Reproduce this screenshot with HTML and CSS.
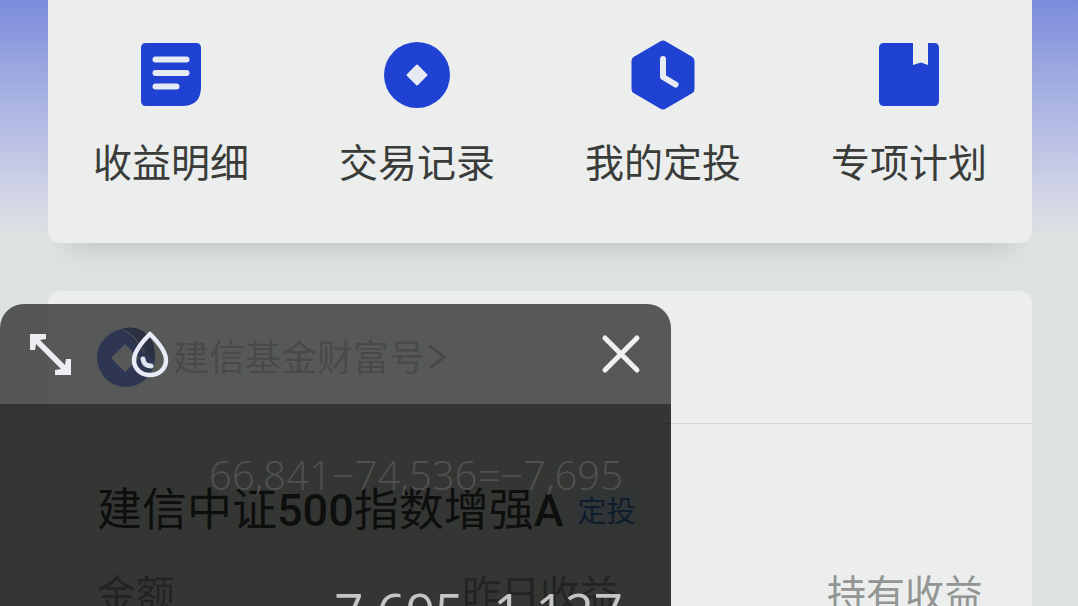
FILE: index.html
```html
<!DOCTYPE html>
<html lang="zh-CN">
<head>
<meta charset="utf-8">
<meta name="viewport" content="width=device-width, initial-scale=1">
<title>基金</title>
<link rel="stylesheet" href="styles.css">
</head>
<body>
<main class="page">
  <nav class="card shortcuts">
    <a class="shortcut" href="#">
      <svg class="shortcut-icon" viewBox="0 0 72 72" aria-hidden="true"><path fill="#1f42d3" d="M11 4H61Q66 4 66 9V48Q66 67 47 67H11Q6 67 6 62V9Q6 4 11 4Z"/><path d="M20.500 20.500H51.500M20.500 34H51.500M20.500 47.500H41.500" stroke="#e6eaf3" stroke-width="6" stroke-linecap="round"/></svg>
      <span>收益明细</span>
    </a>
    <a class="shortcut" href="#">
      <svg class="shortcut-icon" viewBox="0 0 72 72" aria-hidden="true"><circle cx="36" cy="36" r="33" fill="#1f42d3"/><path fill="#e6eaf3" stroke="#e6eaf3" stroke-width="2" stroke-linejoin="round" d="M36 26.500L45.500 36L36 45.500L26.500 36Z"/></svg>
      <span>交易记录</span>
    </a>
    <a class="shortcut" href="#">
      <svg class="shortcut-icon" viewBox="0 0 72 72" aria-hidden="true"><path fill="#1f42d3" stroke="#1f42d3" stroke-width="10" stroke-linejoin="round" d="M36 6.500L62.500 22V50L36 65.500L9.500 50V22Z"/><path d="M36 20V38L48.500 45.500" fill="none" stroke="#e6eaf3" stroke-width="6" stroke-linecap="round" stroke-linejoin="round"/></svg>
      <span>我的定投</span>
    </a>
    <a class="shortcut" href="#">
      <svg class="shortcut-icon" viewBox="0 0 72 72" aria-hidden="true"><path fill="#1f42d3" d="M11 4H40V26L48 23.500L55 26V4H61Q66 4 66 9V62Q66 67 61 67H11Q6 67 6 62V9Q6 4 11 4Z"/></svg>
      <span>专项计划</span>
    </a>
  </nav>

  <section class="card holding">
    <a class="holding-head" href="#">
      <svg class="brand" viewBox="0 0 60 60" aria-hidden="true"><circle cx="29" cy="31" r="29" fill="#1f42c8"/><path d="M24 2C44 -5 62 12 57 33L45 24Z" fill="#0f2470"/><path d="M26 3Q38 8 48 26" fill="none" stroke="#6f8de8" stroke-width="2"/><path d="M28 17L42 31L28 45L14 31Z" fill="#ebedec"/></svg>
      <span class="brand-name">建信基金财富号</span>
      <svg class="chevron" viewBox="0 0 20 30" aria-hidden="true"><path d="M3 4L17 15L3 26" fill="none" stroke="#999" stroke-width="3"/></svg>
    </a>
    <div class="holding-body">
      <div class="fund">
        <h2 class="fund-name">建信中证<b>500</b>指数增强<b>A</b></h2>
        <span class="tag">定投</span>
      </div>
      <div class="columns">
        <span>金额</span>
        <span>昨日收益</span>
        <span>持有收益</span>
      </div>
    </div>
  </section>
</main>

<aside class="calc" aria-label="计算器">
  <header class="calc-bar">
    <button class="tool" aria-label="缩放"><svg viewBox="0 0 48 48" aria-hidden="true"><path d="M8 8L41 41" stroke="#ededf2" stroke-width="5.500"/><path d="M4 20V4H20V9L14 10L10 14L9 20ZM45 29V45H29V40L35 39L39 35L40 29Z" fill="#ededf2"/></svg></button>
    <button class="tool" aria-label="透明度"><svg viewBox="0 0 48 48" aria-hidden="true"><path d="M24 4C19 9 8 20 8 30C8 39 15 45 24 45C33 45 40 39 40 30C40 20 29 9 24 4Z" fill="none" stroke="#e9ebf6" stroke-width="4.500" stroke-linejoin="round"/><path d="M17 29Q18 36 25 36" fill="none" stroke="#dfe2ef" stroke-width="5" stroke-linecap="round"/></svg></button>
    <button class="tool close" aria-label="关闭"><svg viewBox="0 0 48 48" aria-hidden="true"><path d="M8 8L40 40M40 8L8 40" stroke="#f0f0f3" stroke-width="5" stroke-linecap="round"/></svg></button>
  </header>
  <div class="calc-display">
    <div class="expression">66,841−74,536=−7,695</div>
    <div class="result">−7,695−1,127</div>
  </div>
</aside>
</body>
</html>
```
FILE: styles.css
```css
* { box-sizing: border-box; }

html { height: 100%; overflow: hidden; }

body {
  position: relative;
  min-height: 100%;
  margin: 0;
  overflow: hidden;
  background: linear-gradient(#7b8cdb 0, #a9b3e2 100px, #cfd2e6 190px, #dfe3e0 240px) #dfe3e0;
  font-family: "Noto Sans CJK SC", sans-serif;
  font-weight: 400;
  color: #3a3c3a;
}

a { color: inherit; text-decoration: none; }

.page {
  display: flex;
  flex-direction: column;
  gap: 48px;
  height: 100vh;
  padding: 0 46px 0 48px;
}

.card { background: #ebeeec; }

.shortcuts {
  display: grid;
  grid-template-columns: repeat(4, 1fr);
  padding: 39px 0 54px;
  border-radius: 0 0 12px 12px;
  box-shadow: 0 24px 24px -20px rgba(0, 0, 0, 0.14);
}

.shortcut {
  display: flex;
  flex-direction: column;
  align-items: center;
  gap: 21px;
  font-size: 39px;
  line-height: 57px;
}

.shortcut-icon { width: 72px; height: 72px; }

.holding {
  flex: none;
  border-radius: 12px 12px 0 0;
}

.holding-head {
  display: flex;
  align-items: center;
  gap: 16px;
  height: 133px;
  padding: 0 49px;
  border-bottom: 1px solid #d3d6d4;
  font-size: 36px;
  color: #a0a2a0;
}

.brand { width: 60px; height: 60px; }
.brand-name { padding-bottom: 4px; }
.chevron { width: 20px; height: 30px; margin-left: -14px; }

.holding-body { padding: 51px 49px 0; }

.fund { display: flex; align-items: center; gap: 12px; }

.fund-name {
  margin: 0;
  font-size: 45px;
  font-weight: 400;
  line-height: 64px;
  color: #2c2e2c;
}

.fund-name b { font-family: Roboto, sans-serif; font-weight: 500; }

.tag {
  padding: 0 2px;
  background: #e2e8f0;
  font-size: 29px;
  line-height: 40px;
  color: #2f72c4;
}

.columns {
  display: grid;
  grid-template-columns: 1fr 1fr 1fr;
  margin-top: 20px;
  font-size: 39px;
  line-height: 57px;
  color: #929592;
}

.columns span:nth-child(2) { text-align: center; }
.columns span:nth-child(3) { text-align: right; }

.calc {
  position: absolute;
  top: 304px;
  bottom: 0;
  left: 0;
  display: flex;
  flex-direction: column;
  width: 671px;
  border-radius: 24px 24px 0 0;
  overflow: hidden;
}

.calc-bar {
  display: flex;
  flex: none;
  align-items: center;
  gap: 52px;
  height: 100px;
  padding: 0 26px;
  background: rgba(50, 51, 52, 0.8);
}

.tool {
  width: 48px;
  height: 48px;
  padding: 0;
  border: 0;
  background: none;
}

.tool svg { display: block; width: 100%; height: 100%; }
.close { margin-left: auto; }

.calc-display {
  flex: 1;
  min-height: 0;
  padding: 41px 48px 0;
  background: rgba(6, 8, 6, 0.8);
  font-family: "Open Sans", sans-serif;
  text-align: right;
  white-space: nowrap;
}

.expression {
  font-size: 40px;
  font-weight: 300;
  line-height: 60px;
  color: #505250;
}

.result {
  margin-top: 76px;
  font-size: 51px;
  font-weight: 400;
  line-height: 60px;
  color: #c4c6c4;
}
```
